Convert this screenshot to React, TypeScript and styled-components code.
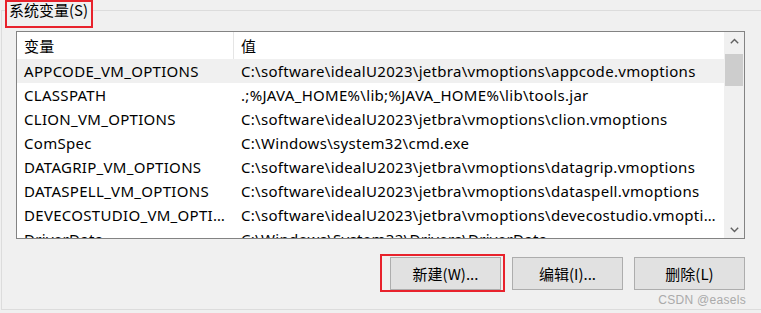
import React from 'react';
import styled, { createGlobalStyle } from 'styled-components';

const GlobalStyle = createGlobalStyle`
  html, body {
    margin: 0;
    padding: 0;
    background: #f0f0f0;
    overflow: hidden;
  }
  body {
    font-family: 'Noto Sans', 'Noto Sans CJK SC', sans-serif;
    color: #000;
  }
`;

const rows = [
  ['APPCODE_VM_OPTIONS', 'C:\\software\\idealU2023\\jetbra\\vmoptions\\appcode.vmoptions'],
  ['CLASSPATH', '.;%JAVA_HOME%\\lib;%JAVA_HOME%\\lib\\tools.jar'],
  ['CLION_VM_OPTIONS', 'C:\\software\\idealU2023\\jetbra\\vmoptions\\clion.vmoptions'],
  ['ComSpec', 'C:\\Windows\\system32\\cmd.exe'],
  ['DATAGRIP_VM_OPTIONS', 'C:\\software\\idealU2023\\jetbra\\vmoptions\\datagrip.vmoptions'],
  ['DATASPELL_VM_OPTIONS', 'C:\\software\\idealU2023\\jetbra\\vmoptions\\dataspell.vmoptions'],
  ['DEVECOSTUDIO_VM_OPTIONS', 'C:\\software\\idealU2023\\jetbra\\vmoptions\\devecostudio.vmoptions'],
  ['DriverData', 'C:\\Windows\\System32\\Drivers\\DriverData'],
];

const App = () => {
  return (
    <Page>
      <GlobalStyle />
      <GroupBox>
        <Title>系统变量(S)</Title>
        <ListBox>
          <ListContent>
            <HeaderRow>
              <NameCell>变量</NameCell>
              <HeaderDivider />
              <ValueCell>值</ValueCell>
            </HeaderRow>
            {rows.map(([name, value], i) => (
              <Row key={name} $hover={i === 0}>
                <NameCell>{name}</NameCell>
                <ValueCell>{value}</ValueCell>
              </Row>
            ))}
          </ListContent>
          <ScrollBar>
            <ArrowButton>
              <svg width="9" height="6" viewBox="0 0 9 6">
                <path d="M0.8 5.2 L4.5 1.5 L8.2 5.2" fill="none" stroke="#606060" strokeWidth="1.4" />
              </svg>
            </ArrowButton>
            <Track>
              <Thumb />
            </Track>
            <ArrowButton>
              <svg width="9" height="6" viewBox="0 0 9 6">
                <path d="M0.8 0.8 L4.5 4.5 L8.2 0.8" fill="none" stroke="#606060" strokeWidth="1.4" />
              </svg>
            </ArrowButton>
          </ScrollBar>
        </ListBox>
        <ButtonRow>
          <Button $marked>新建(W)...</Button>
          <Button>编辑(I)...</Button>
          <Button>删除(L)</Button>
        </ButtonRow>
      </GroupBox>
      <Watermark>CSDN @easels</Watermark>
    </Page>
  );
};

export default App;

const Page = styled.div`
  position: relative;
  width: 761px;
  height: 313px;
`;

const GroupBox = styled.fieldset`
  margin: 0 0 0 1px;
  padding: 0 0 19px 0;
  width: 760px;
  box-sizing: border-box;
  border: 1px solid #dcdcdc;
  border-right: none;
  min-inline-size: 0;
`;

const Title = styled.legend`
  position: relative;
  margin-left: 3px;
  padding: 0 5px 0 4px;
  height: 20px;
  line-height: 20px;
  font-size: 15px;
  font-family: 'Noto Sans CJK SC', sans-serif;
  color: #000;
  &::after {
    content: '';
    position: absolute;
    left: 0;
    right: 0;
    top: 0;
    bottom: -8px;
    border: 2px solid #e8222c;
  }
`;

const ListBox = styled.div`
  margin: 11px 0 0 14px;
  width: 729px;
  height: 208px;
  box-sizing: border-box;
  border: 1px solid #838383;
  background: #fff;
  display: flex;
  overflow: hidden;
`;

const ListContent = styled.div`
  flex: 1;
  min-width: 0;
  overflow: hidden;
`;

const HeaderRow = styled.div`
  height: 27px;
  display: flex;
  align-items: center;
  font-family: 'Noto Sans CJK SC', sans-serif;
`;

const HeaderDivider = styled.div`
  width: 1px;
  height: 27px;
  background: #e5e5e5;
  margin-left: -1px;
`;

const Row = styled.div<{ $hover?: boolean }>`
  height: 24px;
  display: flex;
  align-items: center;
  background: ${(p) => (p.$hover ? '#f0f0f0' : 'transparent')};
`;

const NameCell = styled.div`
  width: 217px;
  flex: none;
  box-sizing: border-box;
  padding: 0 8px 0 7px;
  font-size: 15px;
  letter-spacing: 0.3px;
  white-space: nowrap;
  overflow: hidden;
  text-overflow: ellipsis;
`;

const ValueCell = styled.div`
  flex: 1;
  min-width: 0;
  padding: 0 5px 0 7px;
  font-size: 15px;
  letter-spacing: 0.3px;
  white-space: nowrap;
  overflow: hidden;
  text-overflow: ellipsis;
`;

const ScrollBar = styled.div`
  width: 20px;
  flex: none;
  background: #f0f0f0;
  display: flex;
  flex-direction: column;
`;

const ArrowButton = styled.div`
  height: 17px;
  display: flex;
  align-items: center;
  justify-content: center;
`;

const Track = styled.div`
  flex: 1;
  padding-top: 5px;
`;

const Thumb = styled.div`
  height: 32px;
  margin: 0 1px;
  background: #cdcdcd;
`;

const ButtonRow = styled.div`
  margin: 18px 0 0 0;
  padding-right: 16px;
  display: flex;
  justify-content: flex-end;
  gap: 11px;
`;

const Button = styled.button<{ $marked?: boolean }>`
  position: relative;
  width: 111px;
  height: 33px;
  box-sizing: border-box;
  background: #e1e1e1;
  border: 1px solid #adadad;
  border-radius: 0;
  font-size: 15px;
  font-family: 'Noto Sans CJK SC', sans-serif;
  color: #000;
  padding: 0;
  &::after {
    content: '';
    display: ${(p) => (p.$marked ? 'block' : 'none')};
    position: absolute;
    left: -11px;
    right: -5px;
    top: -4px;
    bottom: -3px;
    border: 2px solid #e8222c;
  }
`;

const Watermark = styled.div`
  position: absolute;
  right: 15px;
  top: 293px;
  font-family: 'Liberation Sans', sans-serif;
  font-size: 12px;
  letter-spacing: 0.3px;
  color: #aaaaaa;
`;
